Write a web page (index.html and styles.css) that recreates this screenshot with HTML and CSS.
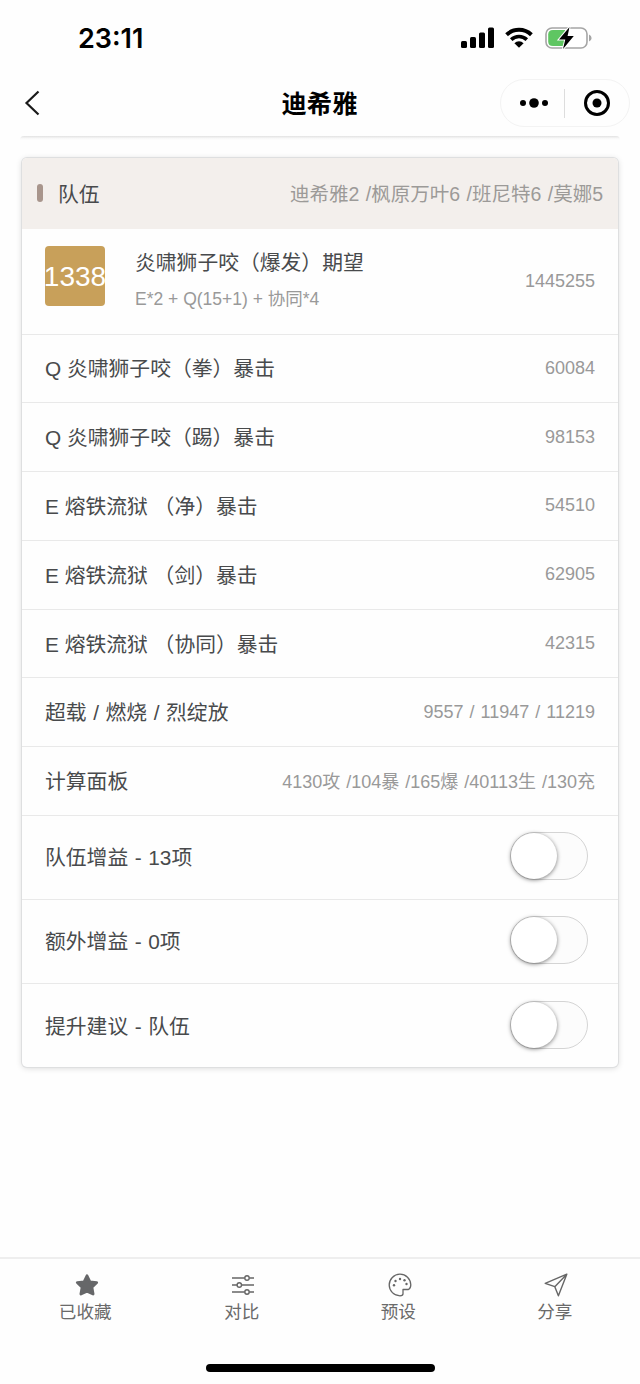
FILE: index.html
```html
<!DOCTYPE html>
<html lang="zh-CN">

<head>
    <meta charset="UTF-8">
    <meta name="viewport" content="width=device-width, initial-scale=1.0">
    <title>迪希雅</title>
    <link rel="stylesheet" href="styles.css">
</head>

<body>
    <div class="status-bar">
        <span class="time">23:11</span>
        <div class="status-icons">
            <svg width="33" height="22" viewBox="0 0 33 22">
                <rect x="0" y="14" width="6" height="7" rx="1.5" />
                <rect x="9" y="10" width="6" height="11" rx="1.5" />
                <rect x="18" y="5.5" width="6" height="15.5" rx="1.5" />
                <rect x="27" y="0.5" width="6" height="20.5" rx="1.5" />
            </svg>
            <svg class="wifi" width="28" height="22" viewBox="0 0 28 22">
                <path d="M1.6 7.8 A18 18 0 0 1 26.4 7.8" fill="none" stroke="#000" stroke-width="4" />
                <path d="M6.2 12.6 A11.3 11.3 0 0 1 21.8 12.6" fill="none" stroke="#000" stroke-width="3.6" />
                <path d="M14 20.8 L9.4 16.2 A6.6 6.6 0 0 1 18.6 16.2 Z" />
            </svg>
            <svg class="battery" width="47" height="24" viewBox="0 0 47 24">
                <rect x="1" y="2" width="41" height="20" rx="6" fill="#fff" stroke="#a5a5a5" stroke-width="1.6" />
                <path d="M8 4 H20 V20 H8 Q3.2 20 3.2 15.5 V8.5 Q3.2 4 8 4 Z" fill="#5fc662" />
                <path d="M44 8.5 Q46.6 9.5 46.6 12 Q46.6 14.5 44 15.5 Z" fill="#a5a5a5" />
                <path d="M24.5 1 L14 13.5 H20.3 L18 23 L28.8 10 H22.6 Z" stroke="#fff" stroke-width="2" paint-order="stroke" />
            </svg>
        </div>
    </div>

    <div class="nav-bar">
        <svg class="back" width="16" height="26" viewBox="0 0 16 26">
            <path d="M14.5 1.5 L2.5 13 L14.5 24.5" fill="none" stroke="#1a1a1a" stroke-width="2.2" />
        </svg>
        <h1>迪希雅</h1>
        <div class="capsule">
            <svg width="30" height="12" viewBox="0 0 30 12">
                <circle cx="4" cy="6" r="3" />
                <circle cx="15" cy="6" r="4.8" />
                <circle cx="26" cy="6" r="3" />
            </svg>
            <span class="capsule-line"></span>
            <svg width="26" height="26" viewBox="0 0 26 26">
                <circle cx="13" cy="13" r="11.5" fill="none" stroke="#000" stroke-width="3" />
                <circle cx="13" cy="13" r="4.5" />
            </svg>
        </div>
    </div>
    <div class="nav-shadow"></div>

    <main class="card">
        <div class="card-header">
            <span class="mark"></span>
            <span class="card-title">队伍</span>
            <span class="team">迪希雅2 /枫原万叶6 /班尼特6 /莫娜5</span>
        </div>
        <div class="row row-main">
            <div class="badge">1338</div>
            <div class="info">
                <div class="label">炎啸狮子咬（爆发）期望</div>
                <div class="note">E*2 + Q(15+1) + 协同*4</div>
            </div>
            <span class="value">1445255</span>
        </div>
        <div class="row"><span class="label">Q 炎啸狮子咬（拳）暴击</span><span class="value">60084</span></div>
        <div class="row"><span class="label">Q 炎啸狮子咬（踢）暴击</span><span class="value">98153</span></div>
        <div class="row"><span class="label">E 熔铁流狱 （净）暴击</span><span class="value">54510</span></div>
        <div class="row"><span class="label">E 熔铁流狱 （剑）暴击</span><span class="value">62905</span></div>
        <div class="row"><span class="label">E 熔铁流狱 （协同）暴击</span><span class="value">42315</span></div>
        <div class="row"><span class="label spaced">超载 / 燃烧 / 烈绽放</span><span class="value">9557 / 11947 / 11219</span></div>
        <div class="row"><span class="label">计算面板</span><span class="value mixed">4130攻 /104暴 /165爆 /40113生 /130充</span></div>
        <div class="row row-switch"><span class="label spaced">队伍增益 - 13项</span><span class="switch"></span></div>
        <div class="row row-switch"><span class="label spaced">额外增益 - 0项</span><span class="switch"></span></div>
        <div class="row row-switch"><span class="label spaced">提升建议 - 队伍</span><span class="switch"></span></div>
    </main>

    <footer>
        <div class="tabs">
            <div class="tab">
                <svg width="24" height="24" viewBox="0 0 24 24">
                    <path d="M12 2.8 L14.9 8.8 L21.7 9.6 L16.9 14.3 L18.1 21 L12 18.2 L5.9 21 L7.1 14.3 L2.3 9.6 L9.1 8.8 Z" fill="#666769" stroke="#666769" stroke-width="2.8" stroke-linejoin="round" />
                </svg>
                <span>已收藏</span>
            </div>
            <div class="tab">
                <svg width="24" height="24" viewBox="0 0 24 24" fill="none" stroke="#666" stroke-width="1.4">
                    <path d="M1 5 H13.7 M18.3 5 H23 M1 12 H6 M10.6 12 H23 M1 19 H13.7 M18.3 19 H23" />
                    <circle cx="16" cy="5" r="2.2" />
                    <circle cx="8.3" cy="12" r="2.2" />
                    <circle cx="16" cy="19" r="2.2" />
                </svg>
                <span>对比</span>
            </div>
            <div class="tab">
                <svg width="24" height="24" viewBox="0 0 24 24">
                    <path d="M15 16.5 H20.5 Q22.8 15.4 22.8 11.8 A10.8 10.8 0 1 0 12 22.8 Q15 22.8 15 20.8 Z" fill="none" stroke="#666" stroke-width="1.3" stroke-linejoin="round" />
                    <g fill="#666">
                        <circle cx="6" cy="12.3" r="1.2" />
                        <circle cx="7.5" cy="8" r="1.2" />
                        <circle cx="12" cy="6" r="1.2" />
                        <circle cx="16.5" cy="7.2" r="1.2" />
                        <circle cx="18.5" cy="11" r="1.2" />
                    </g>
                </svg>
                <span>预设</span>
            </div>
            <div class="tab">
                <svg width="24" height="24" viewBox="0 0 24 24" fill="none" stroke="#666" stroke-width="1.4" stroke-linejoin="round">
                    <path d="M22.8 1.2 L1.2 10.3 L10.8 13.7 L14.4 22.8 Z M22.8 1.2 L10.8 13.7" />
                </svg>
                <span>分享</span>
            </div>
        </div>
        <div class="home-bar"></div>
    </footer>
</body>

</html>
```
FILE: styles.css
```css
* {
    box-sizing: border-box;
}

body {
    margin: 0;
    height: 1384px;
    display: flex;
    flex-direction: column;
    background-color: #fefefe;
    color: #484a4c;
    font-family: "Liberation Sans", "Noto Sans CJK SC", sans-serif;
    white-space: nowrap;
}

svg {
    display: block;
    flex-shrink: 0;
}

.status-bar {
    height: 72px;
    padding: 4px 48px 0 78px;
    display: flex;
    align-items: center;
    justify-content: space-between;
}

.time {
    font-family: Inter, sans-serif;
    font-size: 27px;
    font-weight: 600;
    color: #000;
}

.status-icons {
    display: flex;
    align-items: center;
}

.wifi {
    margin-left: 11px;
}

.battery {
    margin-left: 12px;
}

.nav-bar {
    height: 64px;
    margin: 0 22px;
    padding: 0 0 2px 2px;
    display: grid;
    grid-template-columns: 1fr auto 1fr;
    align-items: center;
}

.nav-bar h1 {
    margin: 2px 3px 0 0;
    font-size: 25.3px;
    font-weight: 700;
    line-height: 36px;
    color: #000;
}

.nav-shadow {
    height: 4px;
    margin: 0 20px;
    border-radius: 4px 4px 0 0;
    background: linear-gradient(#e2e2e2, #f8f8f8 60%, #fefefe);
}

.capsule {
    justify-self: end;
    width: 130px;
    height: 48px;
    margin-right: -12px;
    padding: 0 19px 0 18px;
    display: flex;
    align-items: center;
    border: 1px solid #f3f3f3;
    border-radius: 24px;
}

.capsule-line {
    width: 1px;
    height: 29px;
    margin: 0 19px 0 15px;
    background-color: #ddd;
}

.card {
    margin: 18px 22px 0;
    border-radius: 5px;
    background-color: #fefefe;
    box-shadow: 0 0 0 1px #dedfe0, 0 1px 6px rgba(0, 0, 0, 0.16);
    overflow: hidden;
}

.card-header {
    height: 71px;
    padding: 0 15px 2px 15px;
    display: flex;
    align-items: center;
    background-color: #f3efec;
}

.mark {
    width: 6px;
    height: 18px;
    margin: 1px 15px 0 0;
    border-radius: 3px;
    background-color: #a8958c;
}

.card-title {
    font-size: 20.8px;
}

.team {
    margin-left: auto;
    font-size: 19.5px;
    word-spacing: 1px;
    color: #9c9a98;
}

.row {
    height: 68.8px;
    padding: 0 23px 2px 23px;
    display: flex;
    align-items: center;
    justify-content: space-between;
    border-bottom: 1px solid #e9e9e9;
}

.row:last-child {
    border-bottom: none;
}

.row-main {
    height: 105.5px;
}

.badge {
    width: 60px;
    height: 60px;
    margin-bottom: 9px;
    padding-top: 2px;
    display: flex;
    align-items: center;
    justify-content: center;
    border-radius: 4px;
    background-color: #c8a05a;
    color: #fff;
    font-size: 28px;
}

.info {
    flex: 1;
    margin: 0 0 4px 30px;
}

.label {
    font-size: 20.8px;
}

.spaced {
    word-spacing: 0.8px;
}

.note {
    margin-top: 9px;
    font-size: 17.5px;
    color: #999;
}

.value {
    padding-top: 2px;
    font-size: 18px;
    word-spacing: 1px;
    color: #999;
}

.mixed {
    padding-top: 0;
}

.row-switch {
    height: 83.8px;
    padding-right: 30px;
}

.switch {
    width: 78px;
    height: 48px;
    border: 1px solid #d4d4d4;
    border-radius: 24px;
    background-color: #fcfcfc;
}

.switch::before {
    content: "";
    display: block;
    width: 46px;
    height: 46px;
    border-radius: 50%;
    background-color: #fff;
    box-shadow: 0 1px 4px rgba(0, 0, 0, 0.5);
}

footer {
    height: 127px;
    margin-top: auto;
    border-top: 2px solid #eee;
}

.tabs {
    display: flex;
    padding: 14px 7px 0;
}

.tab {
    flex: 1;
    display: flex;
    flex-direction: column;
    align-items: center;
    font-size: 17.6px;
    line-height: 31px;
    color: #6a6a6a;
}

.tab svg {
    margin-left: 3px;
}

.home-bar {
    width: 229px;
    height: 8px;
    margin: 36px auto 0;
    border-radius: 4px;
    background-color: #000;
}
```
